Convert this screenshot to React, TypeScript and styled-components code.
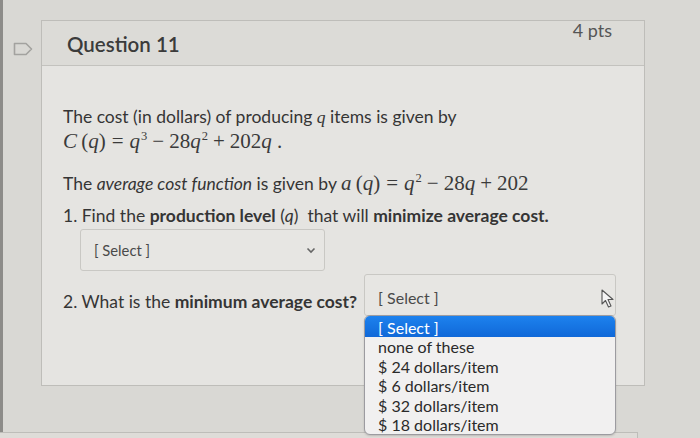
import React from "react";
import styled, { createGlobalStyle } from "styled-components";

const Global = createGlobalStyle`
  html, body { margin: 0; padding: 0; }
  body {
    background: #d9d8d4;
    font-family: Lato, "Open Sans", sans-serif;
    color: #3a3a3a;
    width: 700px;
    height: 438px;
    overflow: hidden;
  }
`;

const Page = styled.div`
  display: flex;
  flex-direction: column;
  padding: 20px 0 0 9px;
  border-left: 3px solid #8d8c89;
  height: 438px;
  box-sizing: border-box;
`;

const Row = styled.div`
  display: flex;
  align-items: flex-start;
  gap: 8px;
`;

const IconCol = styled.div`
  width: 21px;
  padding-top: 20px;
  flex: none;
`;

const Card = styled.div`
  width: 604px;
  border: 1px solid #bebdb9;
  background: #e5e4e1;
  box-sizing: border-box;
`;

const NextCard = styled(Card)`
  margin: 46px 0 0 -14px;
  width: 640px;
  height: 20px;
  border-bottom: none;
  background: #dedcd8;
`;

const Header = styled.div`
  height: 44px;
  display: flex;
  justify-content: space-between;
  align-items: flex-start;
  padding: 0 32px 0 25px;
  background: #dcdbd7;
  border-bottom: 1px solid #c3c2be;
`;

const Title = styled.div`
  font-size: 20.5px;
  font-weight: 600;
  color: #3b3b3b;
  margin-top: 11px;
`;

const Points = styled.div`
  font-size: 18px;
  color: #555;
  margin-top: -2px;
`;

const Body = styled.div`
  padding: 39px 21px 69px 21px;
  font-size: 17.5px;
  line-height: 24px;
  color: #353535;
  position: relative;
`;

const Para = styled.div<{ $mt?: number }>`
  margin-top: ${(p) => p.$mt ?? 0}px;
  white-space: nowrap;
`;

const Math = styled.span`
  font-family: "Liberation Serif", "DejaVu Serif", serif;
  font-size: 21px;
  color: #3a3a3a;
`;

const MI = styled.i`
  font-family: "Liberation Serif", "DejaVu Serif", serif;
  font-style: italic;
`;

const Op = styled.span<{ $rel?: boolean }>`
  margin: 0 ${(p) => (p.$rel ? 6 : 5)}px;
`;

const Sup = styled.sup`
  font-size: 12.5px;
  line-height: 0;
  vertical-align: 8px;
  margin-left: 1px;
`;

const Em = styled.em`
  font-style: italic;
`;

const B = styled.b`
  font-weight: 700;
`;

const SelectBox = styled.div<{ $w: number; $h?: number; $fs: number }>`
  width: ${(p) => p.$w}px;
  height: ${(p) => p.$h ?? 42}px;
  box-sizing: border-box;
  border: 1px solid #c9c8c4;
  border-radius: 3px;
  background: #e7e6e3;
  display: flex;
  align-items: center;
  justify-content: space-between;
  padding: 0 8px 0 13px;
  font-size: ${(p) => p.$fs}px;
  color: #4a4a4a;
  flex: none;
`;

const Indent = styled.div`
  margin: 1px 0 0 17px;
`;

const QRow = styled.div`
  display: flex;
  align-items: flex-start;
  gap: 7px;
  margin-top: 3px;
`;

const QText = styled.div`
  padding-top: 16px;
  white-space: nowrap;
`;

const SelectWrap = styled.div`
  position: relative;
`;

const Dropdown = styled.div`
  position: absolute;
  left: 0;
  top: 41px;
  width: 252px;
  box-sizing: border-box;
  border: 1px solid #9c9ba0;
  border-radius: 6px;
  background: #f1f0f0;
  overflow: hidden;
  z-index: 2;
  box-shadow: 0 1px 2px rgba(0, 0, 0, 0.15);
`;

const Option = styled.div<{ $active?: boolean }>`
  height: 19.4px;
  line-height: 19px;
  padding-left: 13px;
  font-size: 16px;
  color: ${(p) => (p.$active ? "#ffffff" : "#2a2a2a")};
  background: ${(p) =>
    p.$active ? "linear-gradient(#1d82ee, #1068d8)" : "transparent"};
  padding-top: ${(p) => (p.$active ? 2 : 0)}px;
`;

const Cursor = styled.svg`
  position: absolute;
  left: 237px;
  top: 15px;
`;

const SelLabel = styled.span`
  margin-top: 6px;
`;

const Chevron = () => (
  <svg width="10" height="7" viewBox="0 0 10 7">
    <path d="M1.5 1.5 L5 5 L8.5 1.5" stroke="#666" strokeWidth="1.6" fill="none" />
  </svg>
);

const Bookmark = () => (
  <svg width="22" height="14" viewBox="0 0 22 14">
    <path
      d="M2.5 1.5 H14 L19.5 7 L14 12.5 H2.5 Z"
      fill="none"
      stroke="#a3a29f"
      strokeWidth="1.6"
      strokeLinejoin="round"
    />
  </svg>
);

const options = [
  "[ Select ]",
  "none of these",
  "$ 24 dollars/item",
  "$ 6 dollars/item",
  "$ 32 dollars/item",
  "$ 18 dollars/item",
];

export default function App() {
  return (
    <>
      <Global />
      <Page>
        <Row>
          <IconCol>
            <Bookmark />
          </IconCol>
          <Card>
            <Header>
              <Title>Question 11</Title>
              <Points>4 pts</Points>
            </Header>
            <Body>
              <Para>
                The cost (in dollars) of producing <MI>q</MI> items is given by
                <br />
                <Math>
                  <MI>C</MI>&thinsp;(<MI>q</MI>)<Op $rel>=</Op>
                  <MI>q</MI>
                  <Sup>3</Sup>
                  <Op>−</Op>28<MI>q</MI>
                  <Sup>2</Sup>
                  <Op>+</Op>202<MI>q</MI> .
                </Math>
              </Para>
              <Para $mt={17}>
                The <Em>average cost function</Em> is given by{" "}
                <Math>
                  <MI>a</MI>&thinsp;(<MI>q</MI>)<Op $rel>=</Op>
                  <MI>q</MI>
                  <Sup>2</Sup>
                  <Op>−</Op>28<MI>q</MI>
                  <Op>+</Op>202
                </Math>
              </Para>
              <Para $mt={8}>
                1. Find the <B>production level</B> (<Em>q</Em>)&nbsp; that will{" "}
                <B>minimize average cost.</B>
              </Para>
              <Indent>
                <SelectBox $w={245} $fs={14.8}>
                  <span>[ Select ]</span>
                  <Chevron />
                </SelectBox>
              </Indent>
              <QRow>
                <QText>
                  2. What is the <B>minimum average cost?</B>
                </QText>
                <SelectWrap>
                  <SelectBox $w={252} $fs={16}>
                    <SelLabel>[ Select ]</SelLabel>
                  </SelectBox>
                  <Dropdown>
                    {options.map((o, i) => (
                      <Option key={o} $active={i === 0}>
                        {o}
                      </Option>
                    ))}
                  </Dropdown>
                  <Cursor width="16" height="20" viewBox="0 0 16 20">
                    <path
                      d="M1 1 L1 15 L4.5 11.5 L7.5 18 L10 17 L7 10.5 L12 10.5 Z"
                      fill="#f4f4f4"
                      stroke="#555"
                      strokeWidth="1.1"
                      strokeLinejoin="round"
                    />
                  </Cursor>
                </SelectWrap>
              </QRow>
            </Body>
          </Card>
        </Row>
        <NextCard />
      </Page>
    </>
  );
}
